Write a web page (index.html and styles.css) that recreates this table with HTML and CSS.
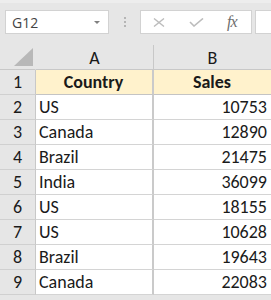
FILE: index.html
```html
<!DOCTYPE html>
<html lang="en">
<head>
    <meta charset="UTF-8">
    <title>Sheet</title>
    <link rel="stylesheet" href="styles.css">
</head>
<body>
    <div class="top-strip"></div>

    <!-- Formula bar -->
    <div class="formula-bar">
        <div class="name-box">
            <span>G12</span>
            <span class="caret"></span>
        </div>
        <div class="grip">
            <span></span><span></span><span></span>
        </div>
        <div class="fn-box">
            <svg class="icon" width="12" height="9" viewBox="0 0 12 9">
                <path d="M1 0.5 L11 8.5 M11 0.5 L1 8.5" stroke="#bcbcbc" stroke-width="1.4" fill="none"/>
            </svg>
            <svg class="icon" width="15" height="9" viewBox="0 0 15 9">
                <path d="M1 4 L5 8 L14 0.5" stroke="#bcbcbc" stroke-width="1.6" fill="none"/>
            </svg>
            <span class="fx">fx</span>
        </div>
        <div class="input-box"></div>
    </div>

    <!-- Grid -->
    <div class="sheet">
        <div class="corner"><span class="corner-tri"></span></div>
        <div class="col-head">A</div>
        <div class="col-head">B</div>

        <div class="row-head">1</div>
        <div class="cell head">Country</div>
        <div class="cell head">Sales</div>

        <div class="row-head">2</div>
        <div class="cell">US</div>
        <div class="cell num">10753</div>

        <div class="row-head">3</div>
        <div class="cell">Canada</div>
        <div class="cell num">12890</div>

        <div class="row-head">4</div>
        <div class="cell">Brazil</div>
        <div class="cell num">21475</div>

        <div class="row-head">5</div>
        <div class="cell">India</div>
        <div class="cell num">36099</div>

        <div class="row-head">6</div>
        <div class="cell">US</div>
        <div class="cell num">18155</div>

        <div class="row-head">7</div>
        <div class="cell">US</div>
        <div class="cell num">10628</div>

        <div class="row-head">8</div>
        <div class="cell">Brazil</div>
        <div class="cell num">19643</div>

        <div class="row-head">9</div>
        <div class="cell">Canada</div>
        <div class="cell num">22083</div>
    </div>
</body>
</html>
```

FILE: styles.css
```css
body {
    margin: 0;
    background: #e6e6e6;
    font-family: "Carlito", "Open Sans", sans-serif;
    color: #1a1a1a;
    overflow: hidden;
}

.top-strip {
    height: 3px;
    background: #ededed;
}

.formula-bar {
    display: flex;
    align-items: center;
    height: 24px;
    margin-top: 7px;
    padding-left: 5px;
}

.name-box {
    box-sizing: border-box;
    width: 104px;
    height: 24px;
    background: white;
    border: 1px solid #d2d2d2;
    display: flex;
    align-items: center;
    justify-content: space-between;
    padding: 0 8px 0 6px;
    font-family: "Open Sans", sans-serif;
    font-size: 14px;
    color: #444;
}

.caret {
    width: 0;
    height: 0;
    border-left: 3px solid transparent;
    border-right: 3px solid transparent;
    border-top: 3px solid #808080;
}

.grip {
    width: 31px;
    display: flex;
    flex-direction: column;
    align-items: center;
    gap: 2px;
}

.grip span {
    width: 2px;
    height: 2px;
    background: #b5b5b5;
}

.fn-box {
    box-sizing: border-box;
    width: 112px;
    height: 24px;
    background: white;
    border: 1px solid #d2d2d2;
    display: flex;
    align-items: center;
    padding-left: 12px;
}

.icon {
    display: block;
}

.icon + .icon {
    margin-left: 24px;
}

.fx {
    margin-left: 23px;
    font-family: "Liberation Serif", serif;
    font-style: italic;
    font-size: 16px;
    color: #6e6e6e;
    letter-spacing: -1px;
}

.input-box {
    box-sizing: border-box;
    flex: 1;
    height: 24px;
    margin-left: 3px;
    background: white;
    border: 1px solid #d2d2d2;
    border-right: none;
}

.sheet {
    display: grid;
    grid-template-columns: 36px 118px 118px;
    grid-auto-rows: 25px;
    margin-top: 11px;
}

.corner,
.col-head,
.row-head {
    box-sizing: border-box;
    background: #e6e6e6;
    border-right: 1px solid #c8c8c8;
    border-bottom: 1px solid #c8c8c8;
}

.corner {
    position: relative;
    border-right-color: #e6e6e6;
}

.corner-tri {
    position: absolute;
    left: 14px;
    top: 3px;
    width: 0;
    height: 0;
    border-left: 19px solid transparent;
    border-bottom: 18px solid #b8b8b8;
}

.col-head {
    display: flex;
    align-items: center;
    justify-content: center;
    font-size: 18px;
    padding-top: 1px;
}

.col-head:last-child {
    border-right: none;
}

.row-head {
    display: flex;
    align-items: center;
    justify-content: center;
    font-size: 18px;
    border-bottom-color: #d0d0d0;
}

.cell {
    box-sizing: border-box;
    background: white;
    border-right: 1px solid #d4d4d4;
    border-bottom: 1px solid #d4d4d4;
    display: flex;
    align-items: center;
    padding: 0 4px 0 3px;
    font-size: 18px;
}

.cell:nth-child(3n+2) {
    border-right: 2px solid #cacaca;
}

.cell.head {
    background: #fff2cc;
    justify-content: center;
    font-weight: bold;
    border-bottom-color: #c4c4c4;
}

.cell.num {
    justify-content: flex-end;
}
```
